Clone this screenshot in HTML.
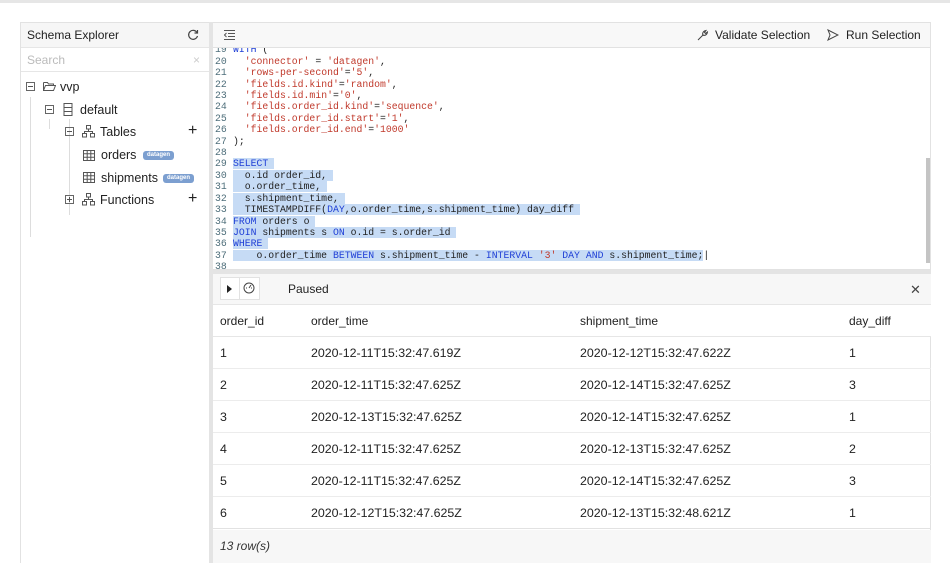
<!DOCTYPE html>
<html><head><meta charset="utf-8">
<style>
*{box-sizing:border-box;margin:0;padding:0}
body{width:950px;height:563px;background:#fff;font-family:"Liberation Sans",sans-serif;color:#222;position:relative;overflow:hidden}
.abs{position:absolute}
.topline{left:0;top:0;width:950px;height:3px;background:#e6e6e6}
.left{left:20px;top:22px;width:190px;height:541px;border:1px solid #e2e2e2;border-bottom:none;background:#fff}
.lhead{left:0;top:0;width:188px;height:25px;background:#f6f6f6;border-bottom:1px solid #e6e6e6;font-size:12px;line-height:25px;padding-left:6px}
.search{left:0;top:25px;width:188px;height:24px;border-bottom:1px solid #e6e6e6;font-size:12px;line-height:24px;color:#bbb;padding-left:6px}
.divider{left:209px;top:22px;width:4px;height:541px;background:#e4e4e4}
.t{font-size:12.5px;line-height:16px;color:#222;white-space:nowrap}
.box{width:9px;height:9px;border:1px solid #666;}
.badge{background:#7c9fd0;color:#fff;font-size:6px;font-weight:bold;border-radius:3px;height:9px;line-height:9px;padding:0 4px}
.vl{width:1px;background:#ddd}
.editor{left:213px;top:22px;width:718px;height:248px;border:1px solid #e2e2e2;border-left:none;background:#fff;overflow:hidden}
.ehead{left:0;top:0;width:718px;height:25px;background:#f8f8f8;border-bottom:1px solid #e2e2e2;font-size:12px;line-height:25px}
.code{left:0;top:10px;font-family:"Liberation Mono",monospace;font-size:9.8px;line-height:11.4px;white-space:pre;color:#222}
.ln{display:inline-block;width:20px;padding-left:2px;color:#4e6e7a}
.s{color:#c0392b}.k{color:#1f3fd6}
.h{background:#c6dbf5}
.hsep{left:213px;top:270px;width:718px;height:4px;background:#e4e4e4}
.res{left:213px;top:274px;width:718px;height:289px;border-right:1px solid #e2e2e2}
.rbar{left:0;top:0;width:718px;height:31px;background:#f7f7f7;border-bottom:1px solid #e6e6e6}
.row{left:0;width:718px;height:32px;border-bottom:1px solid #ececec;font-size:12.4px;line-height:32px}
.row span{position:absolute}
.foot{left:0;top:256px;width:718px;height:33px;background:#f7f7f7;font-size:12px;font-style:italic;line-height:33px;padding-left:7px;color:#333}
</style></head><body>
<div class="abs topline"></div>

<div class="abs left">
  <div class="abs lhead">Schema Explorer
    <svg class="abs" style="left:166px;top:6px" width="12" height="12" viewBox="0 0 12 12"><path d="M10 3.5A4.5 4.5 0 1 0 10.5 7" fill="none" stroke="#444" stroke-width="1.2"/><path d="M10.5 1v3h-3" fill="none" stroke="#444" stroke-width="1.2"/></svg>
  </div>
  <div class="abs search">Search<span class="abs" style="left:172px;top:0;color:#ccc">×</span></div>

  <div class="abs vl" style="left:9px;top:74px;height:140px"></div>
  <div class="abs vl" style="left:48px;top:96px;height:96px"></div>
  <div class="abs vl" style="left:28px;top:96px;height:10px"></div>

  <div class="abs box" style="left:5px;top:59px"><div style="position:absolute;left:1px;top:3px;width:5px;height:1px;background:#555"></div></div>
  <svg class="abs" style="left:22px;top:58px" width="13" height="11" viewBox="0 0 13 11"><path d="M0.5 1.5h4l1 1.5h5v1.5M0.5 1.5v8h10l2-5h-10l-2 5" fill="none" stroke="#555"/></svg>
  <div class="abs t" style="left:39px;top:56px">vvp</div>

  <div class="abs box" style="left:24px;top:82px"><div style="position:absolute;left:1px;top:3px;width:5px;height:1px;background:#555"></div></div>
  <svg class="abs" style="left:42px;top:80px" width="10" height="13" viewBox="0 0 10 13"><rect x="1" y="0.5" width="8" height="12" fill="none" stroke="#555"/><path d="M1 4.5h8M1 8.5h8" stroke="#555"/></svg>
  <div class="abs t" style="left:59px;top:79px">default</div>

  <div class="abs box" style="left:44px;top:104px"><div style="position:absolute;left:1px;top:3px;width:5px;height:1px;background:#555"></div></div>
  <svg class="abs" style="left:61px;top:102px" width="13" height="13" viewBox="0 0 13 13"><rect x="4.5" y="0.5" width="4" height="3.5" fill="none" stroke="#555"/><rect x="0.5" y="8.5" width="4" height="3.5" fill="none" stroke="#555"/><rect x="8.5" y="8.5" width="4" height="3.5" fill="none" stroke="#555"/><path d="M6.5 4v2.5M2.5 8.5V6.5h8v2" fill="none" stroke="#555"/></svg>
  <div class="abs t" style="left:79px;top:101px">Tables</div>
  <div class="abs t" style="left:167px;top:100px;font-size:16px">+</div>

  <svg class="abs" style="left:62px;top:127px" width="12" height="11" viewBox="0 0 12 11"><rect x="0.5" y="0.5" width="11" height="10" fill="none" stroke="#555"/><path d="M0.5 3.8h11M0.5 7.2h11M4.2 0.5v10M7.8 0.5v10" stroke="#555"/></svg>
  <div class="abs t" style="left:80px;top:124px">orders</div>
  <div class="abs badge" style="left:122px;top:128px">datagen</div>

  <svg class="abs" style="left:62px;top:149px" width="12" height="11" viewBox="0 0 12 11"><rect x="0.5" y="0.5" width="11" height="10" fill="none" stroke="#555"/><path d="M0.5 3.8h11M0.5 7.2h11M4.2 0.5v10M7.8 0.5v10" stroke="#555"/></svg>
  <div class="abs t" style="left:80px;top:147px">shipments</div>
  <div class="abs badge" style="left:142px;top:151px">datagen</div>

  <div class="abs box" style="left:44px;top:172px"><div style="position:absolute;left:1px;top:3px;width:5px;height:1px;background:#555"></div><div style="position:absolute;left:3px;top:1px;width:1px;height:5px;background:#555"></div></div>
  <svg class="abs" style="left:61px;top:170px" width="13" height="13" viewBox="0 0 13 13"><rect x="4.5" y="0.5" width="4" height="3.5" fill="none" stroke="#555"/><rect x="0.5" y="8.5" width="4" height="3.5" fill="none" stroke="#555"/><rect x="8.5" y="8.5" width="4" height="3.5" fill="none" stroke="#555"/><path d="M6.5 4v2.5M2.5 8.5V6.5h8v2" fill="none" stroke="#555"/></svg>
  <div class="abs t" style="left:79px;top:169px">Functions</div>
  <div class="abs t" style="left:167px;top:168px;font-size:16px">+</div>
</div>

<div class="abs divider"></div>

<div class="abs editor">
  <div class="abs code">
<span class="ln">19</span><span class="k">WITH</span> (
<span class="ln">20</span>  <span class="s">'connector'</span> = <span class="s">'datagen'</span>,
<span class="ln">21</span>  <span class="s">'rows-per-second'</span>=<span class="s">'5'</span>,
<span class="ln">22</span>  <span class="s">'fields.id.kind'</span>=<span class="s">'random'</span>,
<span class="ln">23</span>  <span class="s">'fields.id.min'</span>=<span class="s">'0'</span>,
<span class="ln">24</span>  <span class="s">'fields.order_id.kind'</span>=<span class="s">'sequence'</span>,
<span class="ln">25</span>  <span class="s">'fields.order_id.start'</span>=<span class="s">'1'</span>,
<span class="ln">26</span>  <span class="s">'fields.order_id.end'</span>=<span class="s">'1000'</span>
<span class="ln">27</span>);
<span class="ln">28</span>
<span class="ln">29</span><span class="h"><span class="k">SELECT</span> </span>
<span class="ln">30</span><span class="h">  o.id order_id, </span>
<span class="ln">31</span><span class="h">  o.order_time, </span>
<span class="ln">32</span><span class="h">  s.shipment_time, </span>
<span class="ln">33</span><span class="h">  TIMESTAMPDIFF(<span class="k">DAY</span>,o.order_time,s.shipment_time) day_diff </span>
<span class="ln">34</span><span class="h"><span class="k">FROM</span> orders o </span>
<span class="ln">35</span><span class="h"><span class="k">JOIN</span> shipments s <span class="k">ON</span> o.id = s.order_id </span>
<span class="ln">36</span><span class="h"><span class="k">WHERE</span> </span>
<span class="ln">37</span><span class="h">    o.order_time <span class="k">BETWEEN</span> s.shipment_time - <span class="k">INTERVAL</span> <span class="s">'3'</span> <span class="k">DAY</span> <span class="k">AND</span> s.shipment_time;</span>|
<span class="ln">38</span></div>
  <div class="abs ehead">
    <svg class="abs" style="left:11px;top:7px" width="11" height="10" viewBox="0 0 11 10"><path d="M0 0.5h11M4 3.5h7M4 6.5h7M0 9.5h11" stroke="#555"/><path d="M2.5 3L0.5 5l2 2" fill="none" stroke="#555"/></svg>
    <svg class="abs" style="left:484px;top:6px" width="12" height="12" viewBox="0 0 12 12"><path d="M1 11l5.5-5.5M6 6.5c-1-2 0-4.5 3-5l-1.5 2 1 1 2-1.5c-.3 3-3 4-5 3z" fill="none" stroke="#444"/></svg>
    <span class="abs" style="left:502px;top:0">Validate Selection</span>
    <svg class="abs" style="left:614px;top:6px" width="12" height="12" viewBox="0 0 12 12"><path d="M1 1l10 5-10 5 2-5z" fill="none" stroke="#444"/></svg>
    <span class="abs" style="left:633px;top:0">Run Selection</span>
  </div>
  <div class="abs" style="left:713px;top:135px;width:5px;height:105px;background:#c4c4c4"></div>
</div>

<div class="abs hsep"></div>

<div class="abs res">
  <div class="abs rbar">
    <div class="abs" style="left:7px;top:3px;width:40px;height:23px;border:1px solid #e2e2e2;background:#fff"></div>
    <div class="abs" style="left:26px;top:3px;width:1px;height:23px;background:#e2e2e2"></div>
    <svg class="abs" style="left:14px;top:11px" width="6" height="8" viewBox="0 0 6 8"><path d="M0 0l5 4-5 4z" fill="#222"/></svg>
    <svg class="abs" style="left:30px;top:8px" width="12" height="12" viewBox="0 0 12 12"><circle cx="6" cy="6" r="5" fill="none" stroke="#444"/><path d="M6 6l2-3" stroke="#444"/><path d="M3 6h1M8 6h1" stroke="#444"/></svg>
    <span class="abs" style="left:75px;top:0;font-size:12px;line-height:31px">Paused</span>
    <span class="abs" style="left:697px;top:0;font-size:13px;line-height:31px;color:#444">✕</span>
  </div>
  <div class="abs row" style="top:31px;height:32px;background:#fff;border-bottom:1px solid #e6e6e6;font-size:12px"><span style="left:7px">order_id</span><span style="left:98px">order_time</span><span style="left:367px">shipment_time</span><span style="left:636px">day_diff</span></div>
  <div class="abs row" style="top:63px"><span style="left:7px">1</span><span style="left:98px">2020-12-11T15:32:47.619Z</span><span style="left:367px">2020-12-12T15:32:47.622Z</span><span style="left:636px">1</span></div>
  <div class="abs row" style="top:95px"><span style="left:7px">2</span><span style="left:98px">2020-12-11T15:32:47.625Z</span><span style="left:367px">2020-12-14T15:32:47.625Z</span><span style="left:636px">3</span></div>
  <div class="abs row" style="top:127px"><span style="left:7px">3</span><span style="left:98px">2020-12-13T15:32:47.625Z</span><span style="left:367px">2020-12-14T15:32:47.625Z</span><span style="left:636px">1</span></div>
  <div class="abs row" style="top:159px"><span style="left:7px">4</span><span style="left:98px">2020-12-11T15:32:47.625Z</span><span style="left:367px">2020-12-13T15:32:47.625Z</span><span style="left:636px">2</span></div>
  <div class="abs row" style="top:191px"><span style="left:7px">5</span><span style="left:98px">2020-12-11T15:32:47.625Z</span><span style="left:367px">2020-12-14T15:32:47.625Z</span><span style="left:636px">3</span></div>
  <div class="abs row" style="top:223px;border-bottom:1px solid #e2e2e2"><span style="left:7px">6</span><span style="left:98px">2020-12-12T15:32:47.625Z</span><span style="left:367px">2020-12-13T15:32:48.621Z</span><span style="left:636px">1</span></div>
  <div class="abs foot">13 row(s)</div>
</div>
</body></html>
